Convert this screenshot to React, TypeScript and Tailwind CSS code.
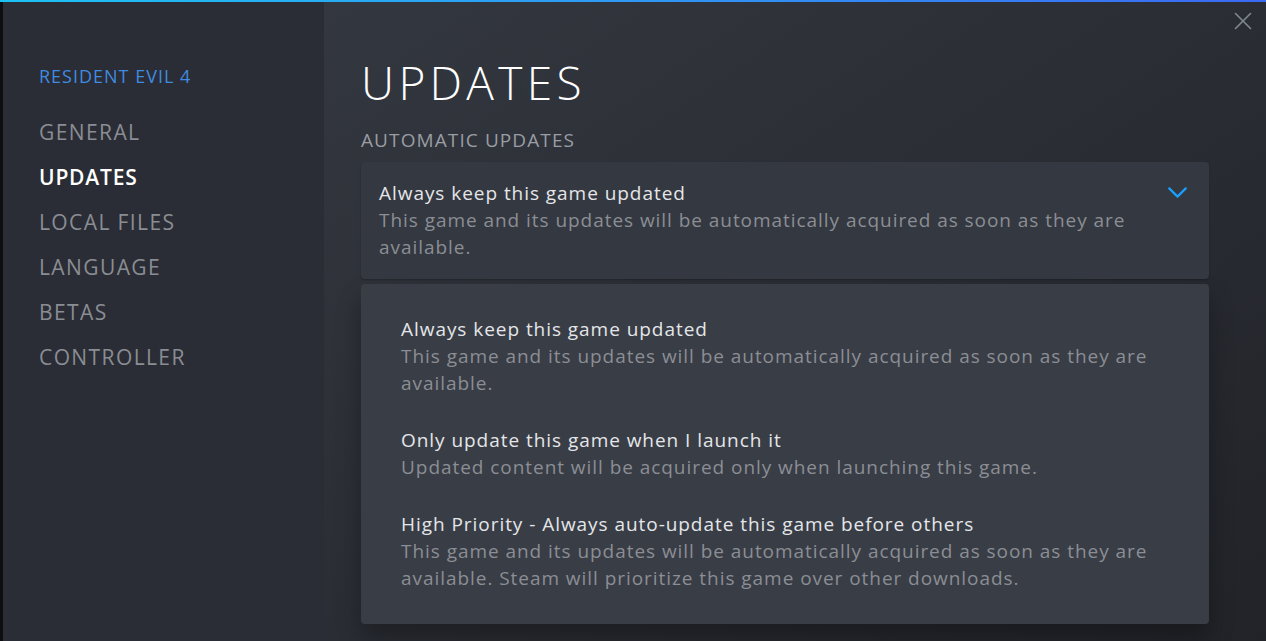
import { X, ChevronDown } from "lucide-react";

const sections = ["GENERAL", "UPDATES", "LOCAL FILES", "LANGUAGE", "BETAS", "CONTROLLER"];

const options = [
  {
    title: "Always keep this game updated",
    desc: "This game and its updates will be automatically acquired as soon as they are available.",
  },
  {
    title: "Only update this game when I launch it",
    desc: "Updated content will be acquired only when launching this game.",
  },
  {
    title: "High Priority - Always auto-update this game before others",
    desc: "This game and its updates will be automatically acquired as soon as they are available. Steam will prioritize this game over other downloads.",
  },
];

export default function App() {
  return (
    <div
      className="w-[1266px] h-[641px] flex flex-col overflow-hidden bg-[#0f1115]"
      style={{ fontFamily: '"Open Sans", "Noto Sans", sans-serif' }}
    >
      {/* Top accent */}
      <div className="h-[2px] bg-gradient-to-r from-[#1cc2f3] to-[#3b69f2]" />

      <div className="flex flex-1 min-h-0">
        <div className="w-[3px] bg-[#0c0e12]" />

        {/* Sidebar */}
        <aside className="w-[321px] bg-[#2a2d35] pl-[36px] pt-[61px]">
          <div className="text-[18px] leading-[26px] text-[#3f8be0] tracking-[1px]">RESIDENT EVIL 4</div>
          <nav className="mt-[21px] flex flex-col">
            {sections.map((s) => (
              <div
                key={s}
                className={
                  s === "UPDATES"
                    ? "h-[45px] flex items-center text-[21px] tracking-[0.8px] text-white font-semibold"
                    : "h-[45px] flex items-center text-[21px] tracking-[1.4px] text-[#8a8d93]"
                }
              >
                {s}
              </div>
            ))}
          </nav>
        </aside>

        {/* Main */}
        <main className="relative flex-1 bg-gradient-to-br from-[#33373f] via-[#2a2d34] to-[#212328] pl-[37px] pr-[57px]">
          <button className="absolute top-[4px] right-[8px] text-[#7e888d]">
            <X size={30} strokeWidth={1.3} />
          </button>

          <h1 className="mt-[50px] text-[46px] leading-[60px] font-light text-white tracking-[4.3px]">UPDATES</h1>
          <div className="mt-[16px] text-[19px] leading-[24px] text-[#9a9da3] tracking-[1.1px]">AUTOMATIC UPDATES</div>

          {/* Selected value */}
          <div className="mt-[10px] relative rounded-[4px] bg-[#343840] pl-[18px] pr-[80px] pt-[18px] pb-[18px] shadow-[0_1px_2px_rgba(0,0,0,0.25)]">
            <div className="text-[19px] leading-[27px] tracking-[0.95px] text-[#e4e6e9]">{options[0].title}</div>
            <div className="text-[19px] leading-[27px] tracking-[0.95px] text-[#8b8e94]">{options[0].desc}</div>
            <ChevronDown
              className="absolute top-[14px] right-[15px] text-[#1a9fff]"
              size={33}
              strokeWidth={1.6}
            />
          </div>

          {/* Dropdown list */}
          <div className="mt-[5px] rounded-[4px] bg-[#393d46] px-[40px] py-[17px] shadow-[0_14px_24px_rgba(0,0,0,0.3)]">
            {options.map((o) => (
              <div key={o.title} className="py-[15px]">
                <div className="text-[19px] leading-[27px] tracking-[0.95px] text-[#e4e6e9]">{o.title}</div>
                <div className="text-[19px] leading-[27px] tracking-[0.95px] text-[#8b8e94]">{o.desc}</div>
              </div>
            ))}
          </div>
        </main>
      </div>
    </div>
  );
}
